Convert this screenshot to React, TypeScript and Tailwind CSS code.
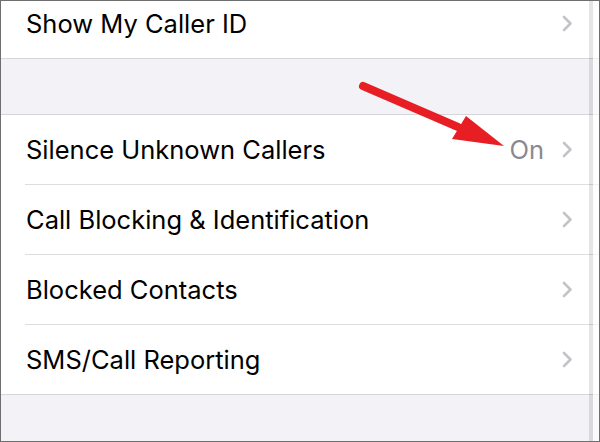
const Chevron = () => (
  <svg width="11" height="17" viewBox="0 0 11 17" fill="none" className="shrink-0">
    <path d="M2 2 L8.5 8.5 L2 15" stroke="#c4c4c8" strokeWidth="2.6" strokeLinecap="round" strokeLinejoin="round" />
  </svg>
);

type RowProps = { label: string; value?: string; last?: boolean };

const Row = ({ label, value, last }: RowProps) => (
  <div className="bg-white">
    <div className="h-[69px] flex items-center pl-[25px] pr-[26px]">
      <span className="flex-1 pt-[1px] text-[25.5px] leading-[30px] text-black">{label}</span>
      {value && <span className="pt-[1px] mr-[18px] text-[25.5px] leading-[30px] text-[#8a8a8e]">{value}</span>}
      <Chevron />
    </div>
    {last ? (
      <div className="h-px bg-[#d6d6da]" />
    ) : (
      <div className="ml-[24px] h-px bg-[#dedee2]" />
    )}
  </div>
);

export default function App() {
  return (
    <div
      className="relative w-[600px] h-[442px] overflow-hidden border border-[#6e6e6e] bg-[#f2f2f7]"
      style={{ fontFamily: "Inter, 'Liberation Sans', sans-serif" }}
    >
      <div className="-mt-[12px]">
        <Row label="Show My Caller ID" last />
      </div>
      <div className="h-[55px]" />
      <div className="h-px bg-[#d6d6da]" />
      <Row label="Silence Unknown Callers" value="On" />
      <Row label="Call Blocking & Identification" />
      <Row label="Blocked Contacts" />
      <Row label="SMS/Call Reporting" last />

      {/* scrollbar strip on the right edge */}
      <div className="absolute top-0 bottom-0 left-[588px] w-[4px] bg-black/10" />
      <div className="absolute top-0 bottom-0 left-[592px] w-[6px] bg-white/60" />

      {/* annotation arrow */}
      <svg className="absolute -left-px -top-px" width="600" height="442" viewBox="0 0 600 442">
        <line x1="363" y1="86" x2="458" y2="127" stroke="#e81e25" strokeWidth="8" strokeLinecap="round" />
        <polygon points="466,116 504,146 452,139" fill="#e81e25" />
      </svg>
    </div>
  );
}
